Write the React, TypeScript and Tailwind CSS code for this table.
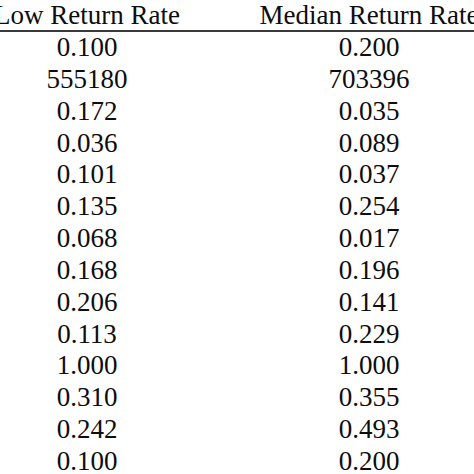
const rows: [string, string][] = [
  ['0.100', '0.200'],
  ['555180', '703396'],
  ['0.172', '0.035'],
  ['0.036', '0.089'],
  ['0.101', '0.037'],
  ['0.135', '0.254'],
  ['0.068', '0.017'],
  ['0.168', '0.196'],
  ['0.206', '0.141'],
  ['0.113', '0.229'],
  ['1.000', '1.000'],
  ['0.310', '0.355'],
  ['0.242', '0.493'],
  ['0.100', '0.200'],
]

function Cell({ children, right }: { children: React.ReactNode; right?: boolean }) {
  return (
    <div
      className={
        right
          ? 'w-[240px] ml-[75px] shrink-0 flex justify-center whitespace-nowrap'
          : 'w-[174px] shrink-0 flex justify-center whitespace-nowrap'
      }
    >
      {children}
    </div>
  )
}

export default function App() {
  return (
    <div className="w-[474px] h-[474px] overflow-hidden bg-white text-[#0d0d0d] text-[27px] font-['Liberation_Serif','Times_New_Roman',serif]">
      <div className="flex leading-[30px]">
        <Cell>Low Return Rate</Cell>
        <Cell right>Median Return Rate</Cell>
      </div>
      <div className="h-[2px] bg-[#3a3a3a]" />
      <div className="flex flex-col leading-[31.85px]">
        {rows.map((r, i) => (
          <div key={i} className="flex">
            <Cell>{r[0]}</Cell>
            <Cell right>{r[1]}</Cell>
          </div>
        ))}
      </div>
    </div>
  )
}
